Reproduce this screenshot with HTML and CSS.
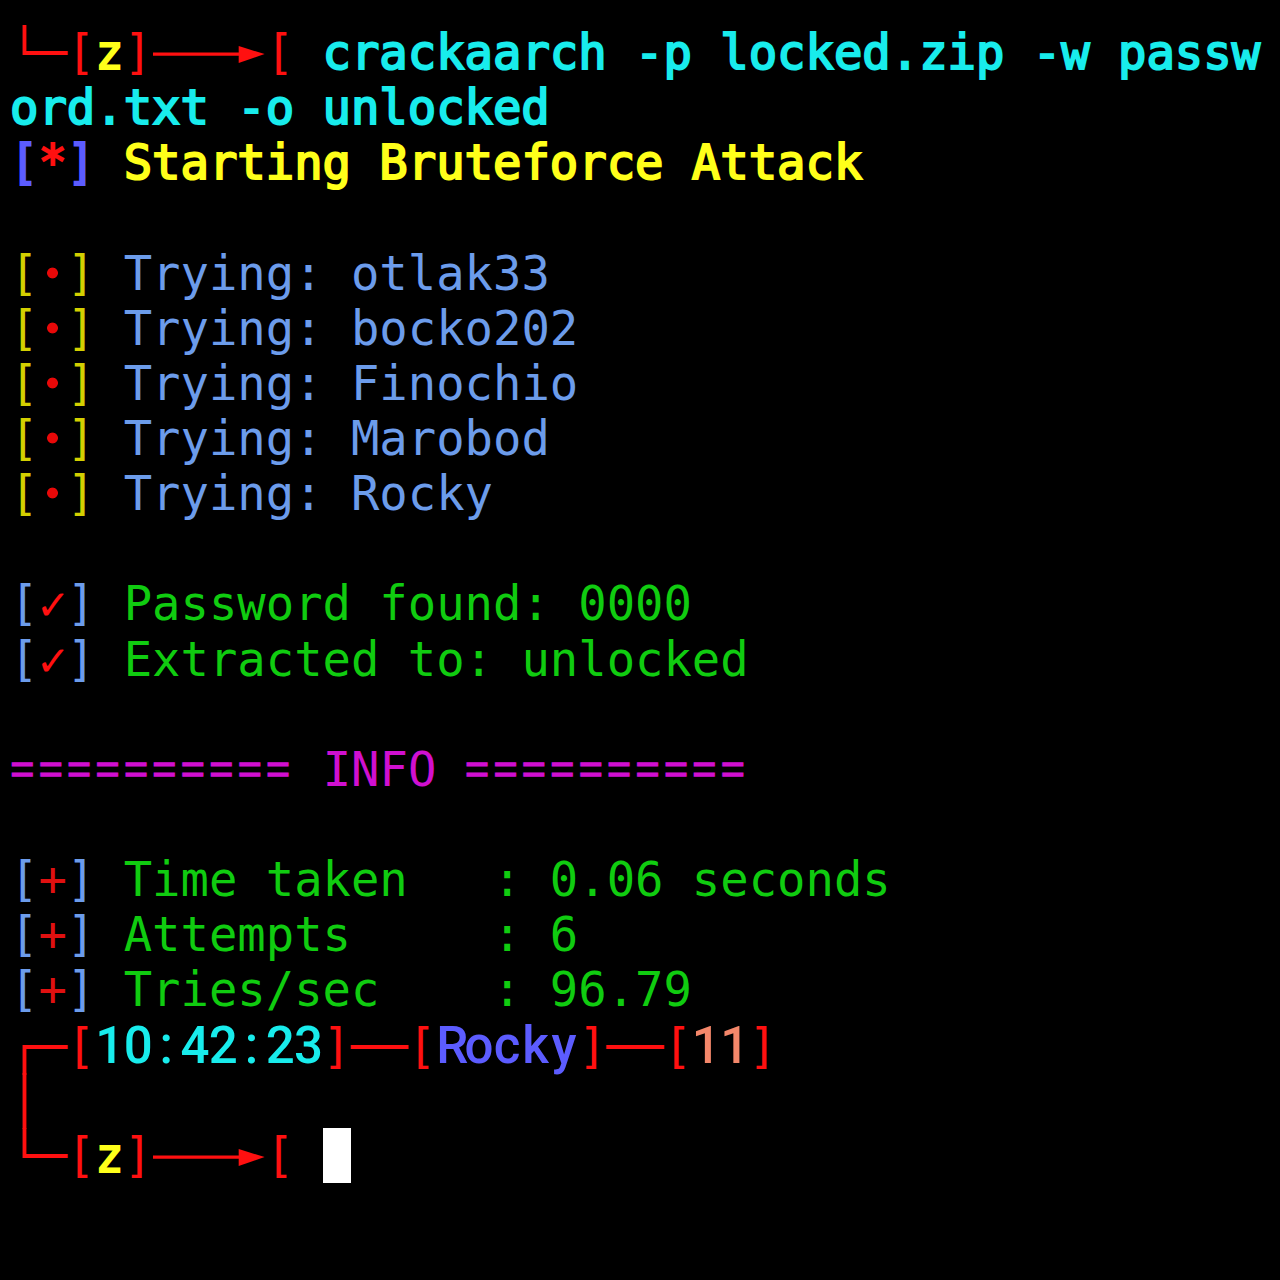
FILE: index.html
```html
<!DOCTYPE html>
<html>
<head>
<meta charset="utf-8">
<title>Terminal</title>
<link rel="stylesheet" href="styles.css">
</head>
<body>
<main class="term">
<div class="ln"><span class="red">└─[</span><span class="yel b">z</span><span class="red">]</span><span class="arrow"><svg viewBox="0 0 114 55" preserveAspectRatio="none"><line x1="1" y1="29" x2="92" y2="29" stroke="#ff1010" stroke-width="3.2"/><polygon points="87,21 113,29 87,38" fill="#ff1010"/></svg></span><span class="red">[</span> <span class="cyan b">crackaarch -p locked.zip -w passw</span></div>
<div class="ln"><span class="cyan b">ord.txt -o unlocked</span></div>
<div class="ln"><span class="blue b">[</span><span class="red b">*</span><span class="blue b">]</span> <span class="yel b">Starting Bruteforce Attack</span></div>
<div class="ln"> </div>
<div class="ln"><span class="dyel">[</span><span class="dot"> </span><span class="dyel">]</span> <span class="lblue">Trying: otlak33</span></div>
<div class="ln"><span class="dyel">[</span><span class="dot"> </span><span class="dyel">]</span> <span class="lblue">Trying: bocko202</span></div>
<div class="ln"><span class="dyel">[</span><span class="dot"> </span><span class="dyel">]</span> <span class="lblue">Trying: Finochio</span></div>
<div class="ln"><span class="dyel">[</span><span class="dot"> </span><span class="dyel">]</span> <span class="lblue">Trying: Marobod</span></div>
<div class="ln"><span class="dyel">[</span><span class="dot"> </span><span class="dyel">]</span> <span class="lblue">Trying: Rocky</span></div>
<div class="ln"> </div>
<div class="ln"><span class="lblue">[</span><span class="red">✓</span><span class="lblue">]</span> <span class="grn">Password found: 0000</span></div>
<div class="ln"><span class="lblue">[</span><span class="red">✓</span><span class="lblue">]</span> <span class="grn">Extracted to: unlocked</span></div>
<div class="ln"> </div>
<div class="ln"><span class="mag eq">==========</span><span class="mag"> INFO </span><span class="mag eq">==========</span></div>
<div class="ln"> </div>
<div class="ln"><span class="lblue">[</span><span class="dred">+</span><span class="lblue">]</span> <span class="grn">Time taken   : 0.06 seconds</span></div>
<div class="ln"><span class="lblue">[</span><span class="dred">+</span><span class="lblue">]</span> <span class="grn">Attempts     : 6</span></div>
<div class="ln"><span class="lblue">[</span><span class="dred">+</span><span class="lblue">]</span> <span class="grn">Tries/sec    : 96.79</span></div>
<div class="ln"><span class="red">┌─[</span><span class="pc cyan"><span class="ch">1</span><span class="ch">0</span><span class="ch">:</span><span class="ch">4</span><span class="ch">2</span><span class="ch">:</span><span class="ch">2</span><span class="ch">3</span></span><span class="red">]──[</span><span class="pc blue"><span class="ch">R</span><span class="ch">o</span><span class="ch">c</span><span class="ch">k</span><span class="ch">y</span></span><span class="red">]──[</span><span class="pc salmon"><span class="ch">1</span><span class="ch">1</span></span><span class="red">]</span></div>
<div class="ln"><span class="red">│</span></div>
<div class="ln"><span class="red">└─[</span><span class="yel b">z</span><span class="red">]</span><span class="arrow"><svg viewBox="0 0 114 55" preserveAspectRatio="none"><line x1="1" y1="29" x2="92" y2="29" stroke="#ff1010" stroke-width="3.2"/><polygon points="87,21 113,29 87,38" fill="#ff1010"/></svg></span><span class="red">[</span> <span class="cursor"> </span></div>
</main>
</body>
</html>
```

FILE: styles.css
```css
html, body {
  margin: 0;
  padding: 0;
  background: #000;
}

body {
  width: 1280px;
  height: 1280px;
  overflow: hidden;
}

.term {
  padding: 25px 0 0 10px;
  font-family: "DejaVu Sans Mono", "Liberation Mono", monospace;
  font-size: 47.2px;
  line-height: 55.15px;
  color: #d0d0d0;
}

.ln {
  height: 55.15px;
  white-space: pre;
}

.b {
  font-weight: normal;
  -webkit-text-stroke: 2px currentColor;
}

.red { color: #ff1010; }
.dred { color: #e01010; }
.yel { color: #ffff1a; }
.dyel { color: #d4d000; }
.cyan { color: #18ecec; }
.blue { color: #5c5cff; }
.lblue { color: #6c9ceb; }
.grn { color: #10cc10; }
.mag { color: #d010d0; }
.salmon { color: #f4876a; }

.eq {
  font-family: "Liberation Mono", monospace;
  font-size: 41px;
  letter-spacing: 3.82px;
  vertical-align: 3px;
  -webkit-text-stroke: 1.3px currentColor;
}

.dot {
  display: inline-block;
  width: 28.42px;
  height: 55.15px;
  vertical-align: top;
  background: radial-gradient(circle at 50% 27px, #e80808 5px, transparent 5.8px);
}

.arrow {
  display: inline-block;
  width: 4ch;
  height: 55.15px;
  vertical-align: top;
}

.arrow svg {
  display: block;
  width: 100%;
  height: 100%;
}

.pc {
  font-family: Roboto, "Noto Sans", sans-serif;
  font-size: 51px;
  font-weight: 500;
}

.ch {
  display: inline-block;
  width: 28.42px;
  text-align: center;
}

.cursor {
  display: inline-block;
  width: 28.42px;
  height: 55.15px;
  background: #fff;
  vertical-align: top;
}
```
